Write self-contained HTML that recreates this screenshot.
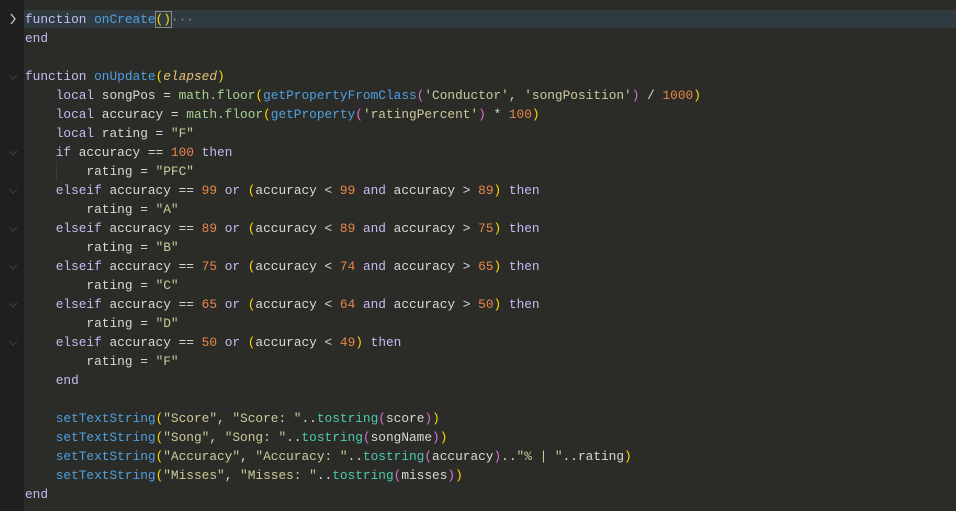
<!DOCTYPE html>
<html><head><meta charset="utf-8"><style>
html,body{margin:0;padding:0;}
body{width:956px;height:511px;background:#2b2c28;position:relative;overflow:hidden;font-family:"Liberation Mono",monospace;font-size:12.8px;}
#gut{position:absolute;left:0;top:0;width:24px;height:511px;background:#1f1f1f;}
#hl{position:absolute;left:24px;top:10px;width:932px;height:18px;background:#2f3b40;}
#code{position:absolute;left:25px;top:10px;white-space:pre;line-height:19px;color:#d8d8d8;}
.k{color:#c7b9f2}.f{color:#4fa0e0}.m{color:#a8d08f}.t{color:#4ec9b0}.s{color:#ccc99a}.n{color:#e8864a}
.y{color:#ffd700}.p{color:#da70d6}.e{color:#e6c07b;font-style:italic}
.g{position:absolute;left:8px;width:10px;height:6px;}
.ig{position:absolute;left:56px;width:1px;background:#3a3b37;}
.cur{outline:1px solid #8a8a8a;}
</style></head><body>
<div id="gut"></div>
<div id="hl"></div>
<div class="ig" style="top:162px;height:19px;left:56px"></div>
<svg style="position:absolute;left:9px;top:13px" width="8" height="12"><path d="M2 1 L6 6 L2 11" stroke="#c8c8c8" stroke-width="1.3" fill="none"/></svg>
<svg class="g" style="top:74px" viewBox="0 0 10 6"><path d="M1 1 L5 5 L9 1" stroke="#3e3e3e" fill="none"/></svg>
<svg class="g" style="top:150px" viewBox="0 0 10 6"><path d="M1 1 L5 5 L9 1" stroke="#3e3e3e" fill="none"/></svg>
<svg class="g" style="top:188px" viewBox="0 0 10 6"><path d="M1 1 L5 5 L9 1" stroke="#3e3e3e" fill="none"/></svg>
<svg class="g" style="top:226px" viewBox="0 0 10 6"><path d="M1 1 L5 5 L9 1" stroke="#3e3e3e" fill="none"/></svg>
<svg class="g" style="top:264px" viewBox="0 0 10 6"><path d="M1 1 L5 5 L9 1" stroke="#3e3e3e" fill="none"/></svg>
<svg class="g" style="top:302px" viewBox="0 0 10 6"><path d="M1 1 L5 5 L9 1" stroke="#3e3e3e" fill="none"/></svg>
<svg class="g" style="top:340px" viewBox="0 0 10 6"><path d="M1 1 L5 5 L9 1" stroke="#3e3e3e" fill="none"/></svg>
<div id="code"><span class="k">function</span> <span class="f">onCreate</span><span class="y cur">()</span><span style="color:#888">···</span>
<span class="k">end</span>

<span class="k">function</span> <span class="f">onUpdate</span><span class="y">(</span><span class="e">elapsed</span><span class="y">)</span>
    <span class="k">local</span> songPos = <span class="m">math.floor</span><span class="y">(</span><span class="f">getPropertyFromClass</span><span class="p">(</span><span class="s">'Conductor'</span>, <span class="s">'songPosition'</span><span class="p">)</span> / <span class="n">1000</span><span class="y">)</span>
    <span class="k">local</span> accuracy = <span class="m">math.floor</span><span class="y">(</span><span class="f">getProperty</span><span class="p">(</span><span class="s">'ratingPercent'</span><span class="p">)</span> * <span class="n">100</span><span class="y">)</span>
    <span class="k">local</span> rating = <span class="s">"F"</span>
    <span class="k">if</span> accuracy == <span class="n">100</span> <span class="k">then</span>
        rating = <span class="s">"PFC"</span>
    <span class="k">elseif</span> accuracy == <span class="n">99</span> <span class="k">or</span> <span class="y">(</span>accuracy &lt; <span class="n">99</span> <span class="k">and</span> accuracy &gt; <span class="n">89</span><span class="y">)</span> <span class="k">then</span>
        rating = <span class="s">"A"</span>
    <span class="k">elseif</span> accuracy == <span class="n">89</span> <span class="k">or</span> <span class="y">(</span>accuracy &lt; <span class="n">89</span> <span class="k">and</span> accuracy &gt; <span class="n">75</span><span class="y">)</span> <span class="k">then</span>
        rating = <span class="s">"B"</span>
    <span class="k">elseif</span> accuracy == <span class="n">75</span> <span class="k">or</span> <span class="y">(</span>accuracy &lt; <span class="n">74</span> <span class="k">and</span> accuracy &gt; <span class="n">65</span><span class="y">)</span> <span class="k">then</span>
        rating = <span class="s">"C"</span>
    <span class="k">elseif</span> accuracy == <span class="n">65</span> <span class="k">or</span> <span class="y">(</span>accuracy &lt; <span class="n">64</span> <span class="k">and</span> accuracy &gt; <span class="n">50</span><span class="y">)</span> <span class="k">then</span>
        rating = <span class="s">"D"</span>
    <span class="k">elseif</span> accuracy == <span class="n">50</span> <span class="k">or</span> <span class="y">(</span>accuracy &lt; <span class="n">49</span><span class="y">)</span> <span class="k">then</span>
        rating = <span class="s">"F"</span>
    <span class="k">end</span>

    <span class="f">setTextString</span><span class="y">(</span><span class="s">"Score"</span>, <span class="s">"Score: "</span>..<span class="t">tostring</span><span class="p">(</span>score<span class="p">)</span><span class="y">)</span>
    <span class="f">setTextString</span><span class="y">(</span><span class="s">"Song"</span>, <span class="s">"Song: "</span>..<span class="t">tostring</span><span class="p">(</span>songName<span class="p">)</span><span class="y">)</span>
    <span class="f">setTextString</span><span class="y">(</span><span class="s">"Accuracy"</span>, <span class="s">"Accuracy: "</span>..<span class="t">tostring</span><span class="p">(</span>accuracy<span class="p">)</span>..<span class="s">"% | "</span>..rating<span class="y">)</span>
    <span class="f">setTextString</span><span class="y">(</span><span class="s">"Misses"</span>, <span class="s">"Misses: "</span>..<span class="t">tostring</span><span class="p">(</span>misses<span class="p">)</span><span class="y">)</span>
<span class="k">end</span></div>
</body></html>
